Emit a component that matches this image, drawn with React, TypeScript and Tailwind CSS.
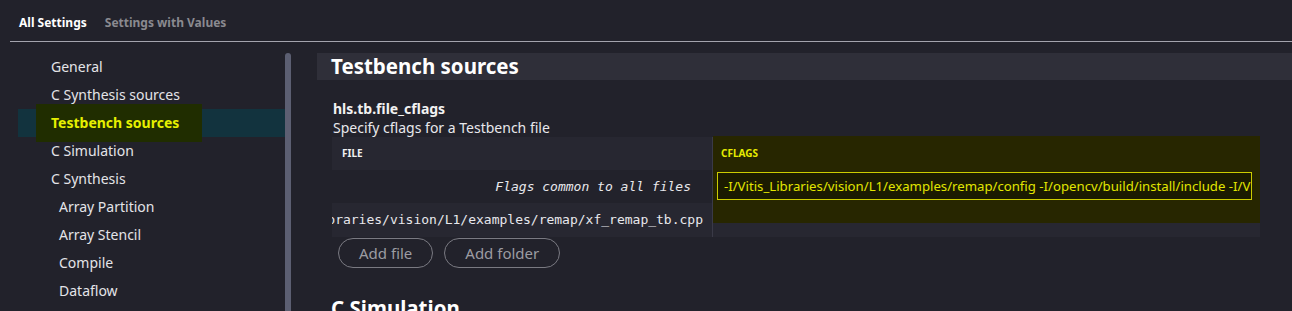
import React from 'react';

type NavItem = { label: string; nested?: boolean; selected?: boolean };

const navItems: NavItem[] = [
  { label: 'General' },
  { label: 'C Synthesis sources' },
  { label: 'Testbench sources', selected: true },
  { label: 'C Simulation' },
  { label: 'C Synthesis' },
  { label: 'Array Partition', nested: true },
  { label: 'Array Stencil', nested: true },
  { label: 'Compile', nested: true },
  { label: 'Dataflow', nested: true },
];

const CFLAGS =
  '-I/Vitis_Libraries/vision/L1/examples/remap/config -I/opencv/build/install/include -I/Vitis_Libraries/vision/L1/include';

const Sidebar: React.FC = () => (
  <aside className="w-[317px] shrink-0 flex">
    <nav className="ml-[18px] w-[267px]">
      {navItems.map(item =>
        item.selected ? (
          <div key={item.label} className="relative h-7 bg-[#12333e]">
            <div className="absolute left-[18px] top-[-5px] h-[38px] w-[166px] bg-[#202d00] pl-[15px] leading-[38px] text-[14px] font-bold text-[#e6f000]">
              {item.label}
            </div>
          </div>
        ) : (
          <div
            key={item.label}
            className={`h-7 leading-7 text-[14px] text-[#e4e4e8] ${item.nested ? 'pl-[41px]' : 'pl-[33px]'}`}
          >
            {item.label}
          </div>
        )
      )}
    </nav>
    <div className="w-[6px] h-[300px] rounded-t-full bg-[#5c5f72]" />
  </aside>
);

const FlagsTable: React.FC = () => (
  <div className="relative w-[928px]">
    <div className="grid grid-cols-[380px_548px] h-[33px]">
      <div className="bg-[#272731] pl-[10px] text-[10px] font-bold leading-[33px] text-[#f0f0f0]">FILE</div>
      <div className="border-l border-[#3a3a47] pl-[8px] text-[10px] font-bold leading-[33px] text-[#e6ec00]">
        <span className="relative z-10">CFLAGS</span>
      </div>
    </div>
    <div className="grid grid-cols-[380px_548px] h-[33px]">
      <div className="pr-[21px] text-right italic text-[13px] leading-[33px] text-[#e8e8ec] font-['DejaVu_Sans_Mono',monospace]">
        Flags common to all files
      </div>
      <div className="border-l border-[#3a3a47] pl-[4px] pr-[8px] pt-[2px]">
        <div className="relative z-10 h-[28px] border border-[#cccc00] bg-[#1b1b00] pl-[6px] text-[13.2px] leading-[26px] text-[#e2e600] whitespace-nowrap overflow-hidden">
          {CFLAGS}
        </div>
      </div>
    </div>
    <div className="grid grid-cols-[380px_548px] h-[34px] bg-[#272731]">
      <div className="flex justify-end overflow-hidden pr-[9px] text-[13px] leading-[34px] text-[#e8e8ec] whitespace-nowrap font-['DejaVu_Sans_Mono',monospace]">
        <span className="shrink-0">/home/user/Vitis_Libraries/vision/L1/examples/remap/xf_remap_tb.cpp</span>
      </div>
      <div className="border-l border-[#3a3a47]" />
    </div>
    <div className="absolute left-[381px] top-[-1px] w-[547px] h-[87px] bg-[#272600]" />
  </div>
);

const App: React.FC = () => {
  return (
    <div className="w-[1292px] h-[311px] overflow-hidden bg-[#22222b] text-white font-['Noto_Sans',sans-serif]">
      <div className="h-[41px] flex gap-[18px] pl-[19px] pt-[13px] text-[12px] font-bold leading-[20px]">
        <span className="text-white">All Settings</span>
        <span className="text-[#8a8a90]">Settings with Values</span>
      </div>
      <div className="ml-[10px] h-px bg-[#a4a4ae]" />

      <div className="flex pt-[11px]">
        <Sidebar />

        <main className="flex-1 min-w-0">
          <div className="h-[27px] bg-[#2f2f39] pl-[14px] text-[20.5px] font-bold leading-[27px] text-white">
            Testbench sources
          </div>
          <div className="pl-[15px] pt-[19px]">
            <div className="pl-px text-[14px] font-bold leading-[19px] text-[#f2f2f2]">hls.tb.file_cflags</div>
            <div className="pl-px text-[14px] leading-[19px] text-[#e8e8ec]">Specify cflags for a Testbench file</div>
            <FlagsTable />
            <div className="mt-px flex gap-[11px] pl-[6px]">
              <button className="h-[30px] px-[20px] rounded-full border border-[#7a7a82] text-[15px] text-[#9c9ca2]">
                Add file
              </button>
              <button className="h-[30px] px-[20px] rounded-full border border-[#7a7a82] text-[15px] text-[#9c9ca2]">
                Add folder
              </button>
            </div>
          </div>
          <div className="mt-[27px] h-[27px] pl-[14px] text-[20.5px] font-bold leading-[27px] text-white">
            C Simulation
          </div>
        </main>
      </div>
    </div>
  );
};

export default App;
